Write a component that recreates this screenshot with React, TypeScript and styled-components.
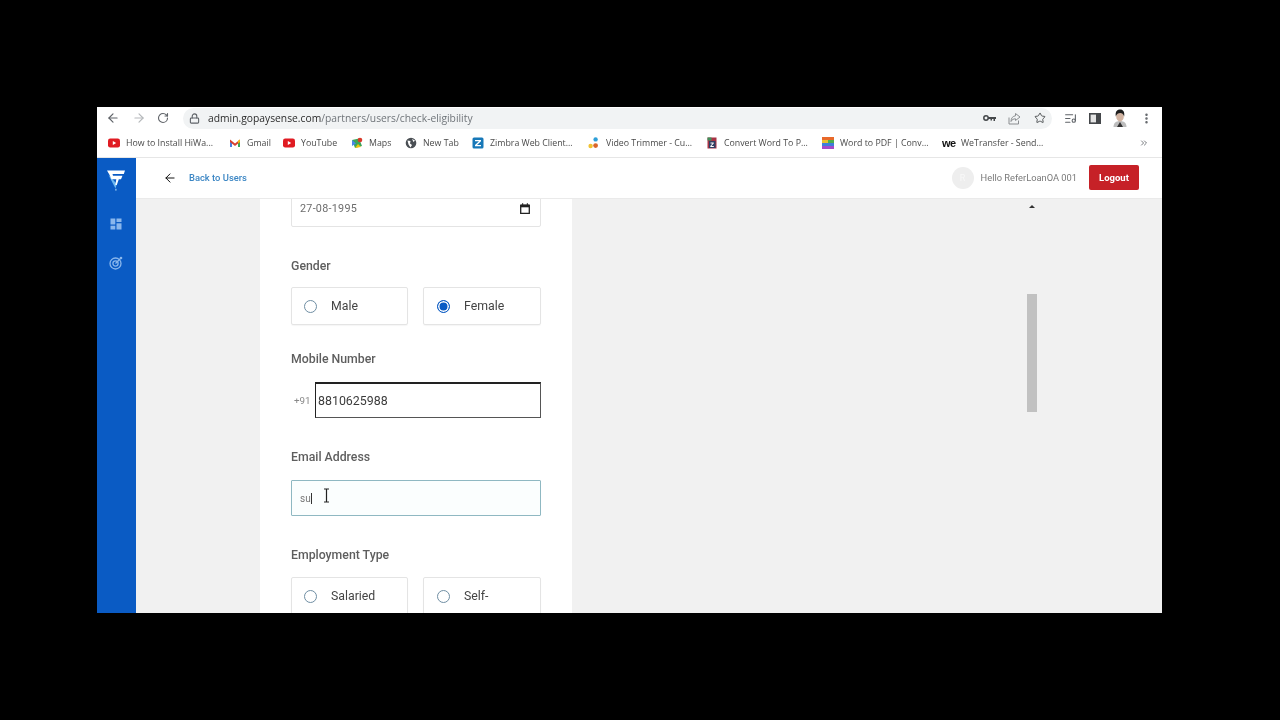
import styled, { createGlobalStyle } from "styled-components";
import {
  ArrowLeft,
  ArrowRight,
  RotateCw,
  Lock,
  Star,
  ListMusic,
  EllipsisVertical,
  ChevronsRight,
} from "lucide-react";

const GlobalStyle = createGlobalStyle`
  html, body {
    margin: 0;
    height: 100%;
    background: #000;
  }
  body {
    font-family: "Roboto", "Liberation Sans", sans-serif;
  }
`;

const Screen = styled.div`
  width: 1280px;
  height: 720px;
  background: #000;
  padding: 107px 118px 107px 97px;
  box-sizing: border-box;
  overflow: hidden;
`;
const BrowserWindow = styled.div`
  width: 1065px;
  height: 506px;
  background: #fff;
  display: flex;
  flex-direction: column;
  overflow: hidden;
  filter: blur(0.3px);
`;
const Toolbar = styled.div`
  height: 22px;
  flex: none;
  display: flex;
  align-items: center;
  background: #fff;
`;
const NavButton = styled.div<{ $w: number; $color?: string }>`
  width: ${(p) => p.$w}px;
  flex: none;
  display: flex;
  justify-content: center;
  align-items: center;
  color: ${(p) => p.$color || "#5f6368"};
`;
const AddressPill = styled.div`
  margin-left: 6px;
  width: 869px;
  height: 21px;
  flex: none;
  background: #f1f3f4;
  border-radius: 11px;
  display: flex;
  align-items: center;
  padding-left: 6px;
  box-sizing: border-box;
`;
const Url = styled.div`
  flex: 1;
  margin-left: 8px;
  font-family: "Open Sans", "Liberation Sans", sans-serif;
  font-size: 10.3px;
  color: #70757a;
  white-space: nowrap;
`;
const UrlHost = styled.span`
  color: #2b2b2b;
`;
const Bookmarks = styled.div`
  height: 29px;
  flex: none;
  display: flex;
  align-items: center;
  padding-left: 11px;
  border-bottom: 1px solid #e6e6e6;
  box-sizing: border-box;
  background: #fff;
`;
const Bookmark = styled.div<{ $w: number }>`
  width: ${(p) => p.$w}px;
  flex: none;
  display: flex;
  align-items: center;
  gap: 6px;
  font-family: "Open Sans", "Liberation Sans", sans-serif;
  font-size: 8.8px;
  color: #4a4a4a;
  white-space: nowrap;
`;
const BookmarkIcon = styled.svg`
  width: 12px;
  height: 12px;
  flex: none;
`;
const WeLogo = styled.span`
  width: 14px;
  flex: none;
  margin-right: -1px;
  font-family: "Liberation Sans", sans-serif;
  font-weight: 700;
  font-size: 11px;
  letter-spacing: -0.6px;
  line-height: 12px;
  color: #111;
`;
const MoreBookmarks = styled.div`
  margin-left: 11px;
  display: flex;
  color: #5f6368;
`;
const Page = styled.div`
  flex: 1;
  min-height: 0;
  display: flex;
`;
const Sidebar = styled.div`
  width: 39px;
  flex: none;
  background: #0a5bc4;
  display: flex;
  flex-direction: column;
  align-items: center;
  padding-right: 1px;
  box-sizing: border-box;
`;
const LogoSlot = styled.div`
  height: 44px;
  display: flex;
  align-items: center;
  justify-content: center;
  margin-bottom: 15px;
`;
const SideIcon = styled.svg`
  width: 14px;
  height: 14px;
  margin-bottom: 25px;
`;
const Main = styled.div`
  flex: 1;
  min-width: 0;
  display: flex;
  flex-direction: column;
`;
const Header = styled.div`
  height: 41px;
  flex: none;
  background: #fff;
  display: flex;
  align-items: center;
  padding: 0 23px 1px 27px;
  border-bottom: 1px solid #eaeaea;
  box-sizing: border-box;
`;
const BackIcon = styled.div`
  display: flex;
  color: #111;
  margin-right: 12px;
`;
const BackLink = styled.a`
  font-size: 9.4px;
  font-weight: 500;
  color: #3b86c4;
  flex: 1;
`;
const Avatar = styled.div`
  width: 22px;
  height: 22px;
  border-radius: 50%;
  background: #eeeeee;
  color: #f8f8f8;
  font-size: 9px;
  display: flex;
  align-items: center;
  justify-content: center;
  margin-right: 7px;
`;
const Hello = styled.div`
  font-size: 9.3px;
  color: #7a7a7a;
  margin-right: 12px;
`;
const Logout = styled.button`
  width: 50px;
  height: 25px;
  border: 0;
  border-radius: 2px;
  background: #c62127;
  color: #fff;
  font-family: inherit;
  font-size: 9.5px;
  font-weight: 700;
  padding: 0;
`;
const Content = styled.div`
  flex: 1;
  min-height: 0;
  background: #f1f1f1;
  display: flex;
  padding-left: 124px;
`;
const Card = styled.div`
  width: 312px;
  flex: none;
  background: #fff;
  padding: 0 31px;
  box-sizing: border-box;
  overflow: hidden;
`;
const DateField = styled.div`
  margin-top: -9px;
  height: 37px;
  width: 250px;
  box-sizing: border-box;
  border: 1px solid #e4e4e4;
  border-radius: 2px;
  display: flex;
  align-items: center;
  justify-content: space-between;
  padding: 0 10px 0 8px;
  font-size: 10.8px;
  letter-spacing: 0.25px;
  color: #6d6d6d;
`;
const Label = styled.div<{ $top: number; $bottom: number }>`
  margin-top: ${(p) => p.$top}px;
  margin-bottom: ${(p) => p.$bottom}px;
  height: 16px;
  line-height: 16px;
  font-size: 12.3px;
  font-weight: 500;
  color: #5e5e5e;
`;
const RadioRow = styled.div`
  display: grid;
  grid-template-columns: 117px 118px;
  column-gap: 15px;
  width: 250px;
`;
const RadioCard = styled.div`
  height: 38px;
  box-sizing: border-box;
  border: 1px solid #e4e4e4;
  border-radius: 2px;
  box-shadow: 0 1px 1px rgba(0, 0, 0, 0.04);
  display: flex;
  align-items: center;
  padding-left: 12px;
  gap: 14px;
  font-size: 12.3px;
  color: #444;

  & + & {
    padding-left: 13px;
  }
`;
const RadioDot = styled.span<{ $on?: boolean }>`
  width: 13px;
  height: 13px;
  box-sizing: border-box;
  border-radius: 50%;
  flex: none;
  border: 1px solid ${(p) => (p.$on ? "#0a5bc4" : "#6f8ea3")};
  background: ${(p) => (p.$on ? "#0a5bc4" : "#fff")};
  box-shadow: ${(p) => (p.$on ? "inset 0 0 0 1.5px #fff" : "none")};
`;
const PhoneRow = styled.div`
  display: flex;
  align-items: center;
  width: 250px;
`;
const Prefix = styled.div`
  width: 24px;
  flex: none;
  padding-left: 3px;
  box-sizing: border-box;
  font-size: 9.8px;
  color: #888;
`;
const PhoneInput = styled.div`
  flex: 1;
  height: 36px;
  box-sizing: border-box;
  border: 1px solid #222;
  border-right-color: #555;
  border-bottom-color: #555;
  border-top-width: 2px;
  display: flex;
  align-items: center;
  padding-left: 2px;
  padding-bottom: 1px;
  font-size: 12.4px;
  color: #3c3c3c;
`;
const EmailInput = styled.div`
  position: relative;
  width: 250px;
  height: 36px;
  box-sizing: border-box;
  border: 1px solid #8fb8c2;
  border-radius: 1px;
  background: #fbfefe;
  display: flex;
  align-items: center;
  padding-left: 8px;
  font-size: 10px;
  color: #777;
`;
const Caret = styled.span`
  width: 1px;
  height: 11px;
  background: #333;
`;
const IBeam = styled.svg`
  position: absolute;
  left: 30px;
  top: 7px;
  width: 9px;
  height: 15px;
`;
const ScrollTrack = styled.div`
  margin-left: 455px;
  width: 10px;
  flex: none;
  display: flex;
  flex-direction: column;
  align-items: center;
`;
const ScrollArrow = styled.div`
  margin-top: 6px;
  margin-bottom: 86px;
  width: 0;
  height: 0;
  border-left: 3px solid transparent;
  border-right: 3px solid transparent;
  border-bottom: 3px solid #333;
`;
const ScrollThumb = styled.div`
  width: 10px;
  height: 118px;
  background: #c1c1c1;
`;

const bookmarks = [
  { w: 121, text: "How to Install HiWa...", icon: "yt" },
  { w: 54, text: "Gmail", icon: "gmail" },
  { w: 68, text: "YouTube", icon: "yt" },
  { w: 54, text: "Maps", icon: "maps" },
  { w: 67, text: "New Tab", icon: "globe" },
  { w: 116, text: "Zimbra Web Client...", icon: "zimbra" },
  { w: 118, text: "Video Trimmer - Cu...", icon: "dots" },
  { w: 116, text: "Convert Word To P...", icon: "convert" },
  { w: 120, text: "Word to PDF | Conv...", icon: "color" },
  { w: 186, text: "WeTransfer - Send...", icon: "we" },
];

function FavIcon({ name }: { name: string }) {
  if (name === "we") return <WeLogo>we</WeLogo>;
  return (
    <BookmarkIcon viewBox="0 0 12 12">
      {name === "yt" && (
        <>
          <rect x="0" y="1.5" width="12" height="9" rx="2.2" fill="#e01b22" />
          <path d="M4.8 4v4L8.2 6z" fill="#fff" />
        </>
      )}
      {name === "gmail" && (
        <>
          <path d="M1 3v7h2V5.500z" fill="#4a7fe0" />
          <path d="M11 3v7H9V5.500z" fill="#3aa55a" />
          <path d="M1 2.500L6 6.500l5-4v2.500L6 9 1 5z" fill="#d8402f" />
          <path d="M9 3.800l2-1.300V5L9 6.500z" fill="#f2b90f" />
        </>
      )}
      {name === "maps" && (
        <>
          <path d="M1 3l7-1.500L11 9l-7 2z" fill="#3ba55a" />
          <path d="M1 3l4 3.500L1 9z" fill="#4a86e8" />
          <path d="M4 11l3-4 3 3z" fill="#f4c20d" />
          <circle cx="9" cy="3" r="2.300" fill="#d93a2b" />
        </>
      )}
      {name === "globe" && (
        <>
          <circle cx="6" cy="6" r="5.300" fill="#4a4f54" />
          <path d="M2.500 3.500l3 .5L5 6.500 7 8 5.500 10.500 3.500 7.500zM7 2l3 1.500L8.500 5z" fill="#fff" />
        </>
      )}
      {name === "zimbra" && (
        <>
          <rect x="0.500" y="0.500" width="11" height="11" rx="1.500" fill="#1778b8" />
          <path d="M3 3h6v1.300L5 8h4v1.200H3V8l4-3.700H3z" fill="#fff" />
        </>
      )}
      {name === "dots" && (
        <>
          <circle cx="7.600" cy="2.400" r="2.200" fill="#2d9fd8" />
          <circle cx="2.600" cy="9" r="2.200" fill="#f1c232" />
          <circle cx="7.600" cy="8.600" r="2.400" fill="#d9662b" />
        </>
      )}
      {name === "convert" && (
        <>
          <rect x="1.500" y="0.500" width="9" height="11" fill="#a83244" />
          <rect x="1.500" y="0.500" width="4" height="3" fill="#3f8f5a" />
          <rect x="3" y="4" width="6.500" height="7" fill="#2f3f63" />
          <path d="M4.500 5.500h3.200v1L5.400 9h2.400v1H4.300V9l2.200-2.500h-2z" fill="#fff" />
        </>
      )}
      {name === "color" && (
        <>
          <rect x="0" y="0" width="12" height="3" fill="#e8692a" />
          <rect x="0" y="3" width="6" height="3" fill="#e9c22d" />
          <rect x="6" y="3" width="6" height="3" fill="#4cae4f" />
          <rect x="0" y="6" width="12" height="3" fill="#3d7fd9" />
          <rect x="0" y="9" width="12" height="3" fill="#a44bc9" />
        </>
      )}
    </BookmarkIcon>
  );
}

function App() {
  return (
    <>
      <GlobalStyle />
      <Screen>
        <BrowserWindow>
          <Toolbar>
            <NavButton $w={32}>
              <ArrowLeft size={14} strokeWidth={2} />
            </NavButton>
            <NavButton $w={20} $color="#b5b8bb">
              <ArrowRight size={14} strokeWidth={2} />
            </NavButton>
            <NavButton $w={28}>
              <RotateCw size={12} strokeWidth={2.2} />
            </NavButton>
            <AddressPill>
              <Lock size={11} strokeWidth={2.4} color="#5f6368" />
              <Url>
                <UrlHost>admin.gopaysense.com</UrlHost>/partners/users/check-eligibility
              </Url>
              <NavButton $w={25} $color="#45484b">
                <svg width="13" height="8" viewBox="0 0 13 8">
                  <circle cx="3" cy="4" r="2.200" fill="none" stroke="currentColor" strokeWidth="1.500" />
                  <path d="M5 3h8v2h-1v2h-1.500V5H9v1.500H7.500V5H5z" fill="currentColor" />
                </svg>
              </NavButton>
              <NavButton $w={25} $color="#8a8d90">
                <svg width="13" height="13" viewBox="0 0 13 13" fill="none" stroke="currentColor" strokeWidth="1">
                  <path d="M1 5.500V12h9.500V8.500" />
                  <path d="M7.500 1.500L12 5 7.500 8.500V6.800C5.500 6.800 4 7.500 3 9.500 3 6 5 4 7.500 3.800z" />
                </svg>
              </NavButton>
              <NavButton $w={25} $color="#44474a">
                <Star size={12} strokeWidth={1.8} />
              </NavButton>
            </AddressPill>
            <NavButton $w={36}>
              <ListMusic size={13} strokeWidth={2} />
            </NavButton>
            <NavButton $w={14} $color="#44474a">
              <svg width="12" height="11" viewBox="0 0 12 11">
                <rect x="0.800" y="0.800" width="10.400" height="9.400" fill="#e4e4e4" stroke="currentColor" strokeWidth="1.600" />
                <rect x="7" y="1" width="4" height="9" fill="currentColor" />
              </svg>
            </NavButton>
            <NavButton $w={36}>
              <svg width="16" height="18" viewBox="0 0 16 18">
                <path d="M1.500 18c0-4 2.500-6 6.500-6s6.500 2 6.500 6z" fill="#bdbdbd" />
                <path d="M5 18l3-5 3 5z" fill="#333" />
                <ellipse cx="8" cy="7.500" rx="3.800" ry="5" fill="#d2b4a2" />
                <path d="M3.800 7.500C3 2 5.500.5 8.300.5s4.500 2 3.900 7c-.8-2.500-2.200-3.500-4-3.500S4.500 5 3.800 7.500z" fill="#1d1d1d" />
              </svg>
            </NavButton>
            <NavButton $w={16}>
              <EllipsisVertical size={13} strokeWidth={2.6} />
            </NavButton>
          </Toolbar>
          <Bookmarks>
            {bookmarks.map((b) => (
              <Bookmark key={b.text} $w={b.w}>
                <FavIcon name={b.icon} />
                {b.text}
              </Bookmark>
            ))}
            <MoreBookmarks>
              <ChevronsRight size={10} strokeWidth={2} />
            </MoreBookmarks>
          </Bookmarks>
          <Page>
            <Sidebar>
              <LogoSlot>
                <svg width="20" height="22" viewBox="0 0 20 22">
                  <path d="M2.500 6L9.500 19.500 10.800 15 5.500 9z" fill="#6db8f0" />
                  <path d="M1 1.500H19L17.800 5H6.500L7 6.800H16.500L15 10.300H12.800L10.800 16H9.300L10.300 10.300H5.500L3.300 5.500z" fill="#fff" />
                  <rect x="9.300" y="19.800" width="1.200" height="1.800" fill="#9fd0f5" />
                </svg>
              </LogoSlot>
              <SideIcon viewBox="0 0 14 14">
                <g fill="#8ab7ec">
                  <rect x="1.500" y="1.500" width="4.800" height="6" />
                  <rect x="7.500" y="1.500" width="5" height="3.500" />
                  <rect x="1.500" y="8.700" width="4.800" height="3.800" />
                  <rect x="7.500" y="6.300" width="5" height="6.200" />
                </g>
              </SideIcon>
              <SideIcon viewBox="0 0 14 14">
                <g fill="none" stroke="#8ab7ec" strokeWidth="1.300">
                  <circle cx="6.500" cy="7.500" r="5.500" />
                  <circle cx="6.500" cy="7.500" r="2.600" />
                  <path d="M6.500 7.500L12 2" />
                </g>
                <circle cx="12" cy="2" r="1.300" fill="#8ab7ec" />
              </SideIcon>
            </Sidebar>
            <Main>
              <Header>
                <BackIcon>
                  <ArrowLeft size={14} strokeWidth={1.7} />
                </BackIcon>
                <BackLink>Back to Users</BackLink>
                <Avatar>R</Avatar>
                <Hello>Hello ReferLoanOA 001</Hello>
                <Logout>Logout</Logout>
              </Header>
              <Content>
                <Card>
                  <DateField>
                    27-08-1995
                    <svg width="10" height="11" viewBox="0 0 10 11">
                      <path d="M0.700 2.500h8.600v7.800H0.700z" fill="none" stroke="#222" strokeWidth="1.300" />
                      <rect x="0.500" y="1.500" width="9" height="2.800" fill="#222" />
                      <rect x="2" y="0.300" width="1.200" height="1.500" fill="#222" />
                      <rect x="6.800" y="0.300" width="1.200" height="1.500" fill="#222" />
                    </svg>
                  </DateField>
                  <Label $top={31} $bottom={13}>Gender</Label>
                  <RadioRow>
                    <RadioCard>
                      <RadioDot />
                      Male
                    </RadioCard>
                    <RadioCard>
                      <RadioDot $on />
                      Female
                    </RadioCard>
                  </RadioRow>
                  <Label $top={26} $bottom={15}>Mobile Number</Label>
                  <PhoneRow>
                    <Prefix>+91</Prefix>
                    <PhoneInput>8810625988</PhoneInput>
                  </PhoneRow>
                  <Label $top={31} $bottom={15}>Email Address</Label>
                  <EmailInput>
                    su
                    <Caret />
                    <IBeam viewBox="0 0 9 15">
                      <path d="M2 1h5M2 14h5M4.500 1v13" stroke="#222" strokeWidth="1.200" fill="none" />
                    </IBeam>
                  </EmailInput>
                  <Label $top={31} $bottom={14}>Employment Type</Label>
                  <RadioRow>
                    <RadioCard>
                      <RadioDot />
                      Salaried
                    </RadioCard>
                    <RadioCard>
                      <RadioDot />
                      Self-
                    </RadioCard>
                  </RadioRow>
                </Card>
                <ScrollTrack>
                  <ScrollArrow />
                  <ScrollThumb />
                </ScrollTrack>
              </Content>
            </Main>
          </Page>
        </BrowserWindow>
      </Screen>
    </>
  );
}

export default App;
